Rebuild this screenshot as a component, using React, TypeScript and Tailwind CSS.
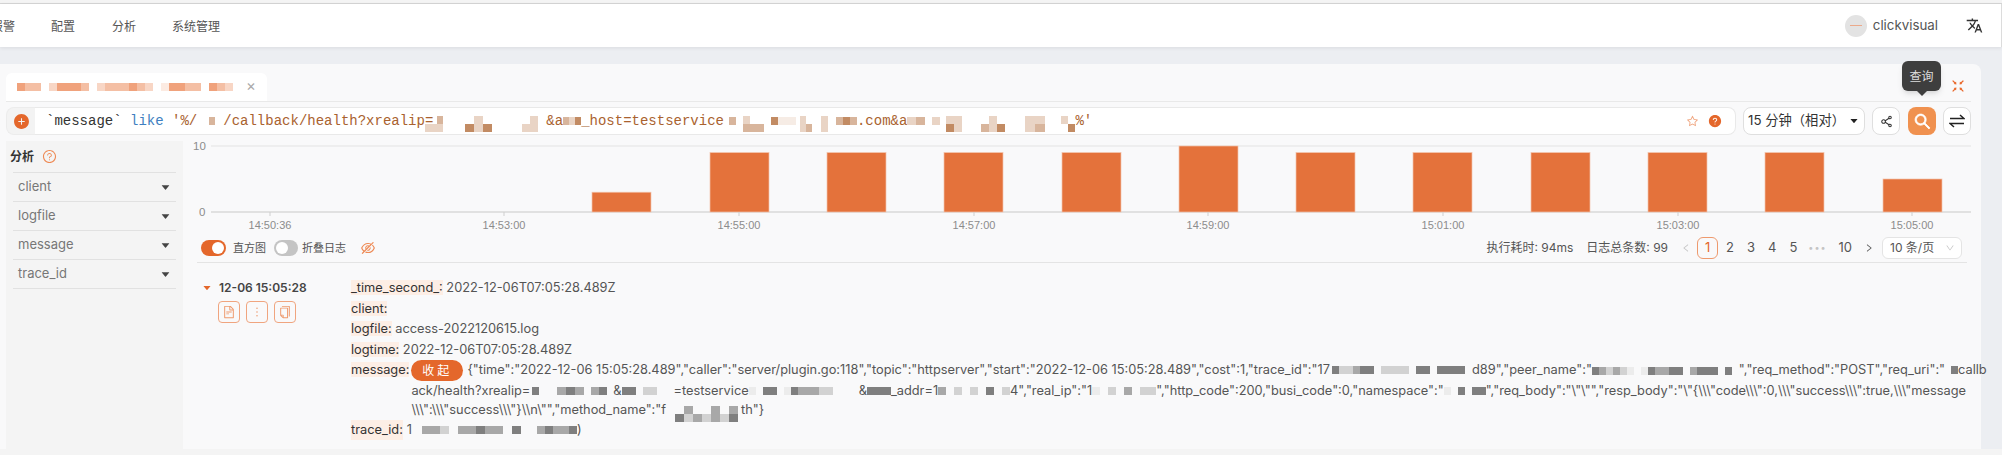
import React from 'react';
import {
  AiFillCaretDown,
  AiFillPlusCircle,
  AiFillQuestionCircle,
  AiOutlineCopy,
  AiOutlineDown,
  AiOutlineEyeInvisible,
  AiOutlineFileText,
  AiOutlineFullscreenExit,
  AiOutlineLeft,
  AiOutlineMore,
  AiOutlineQuestionCircle,
  AiOutlineRight,
  AiOutlineSearch,
  AiOutlineShareAlt,
  AiOutlineStar,
} from 'react-icons/ai';
import { MdTranslate } from 'react-icons/md';

// blurred-out parts of the screenshot, one char per cell
const grayCells: Record<string, string> = {
  '.': 'bg-transparent',
  d: 'bg-[#7f7f7f]',
  m: 'bg-[#a8a8a8]',
  l: 'bg-[#d2d2d2]',
  f: 'bg-[#ececec]',
};
const brownCells: Record<string, string> = {
  '.': 'bg-transparent',
  d: 'bg-[#c28b63]',
  m: 'bg-[#d8b59c]',
  l: 'bg-[#e9d4c5]',
  f: 'bg-[#f6ece5]',
};
const tabCells: Record<string, string> = {
  '.': 'bg-transparent',
  d: 'bg-[#f0a27c]',
  m: 'bg-[#f4bfa4]',
  l: 'bg-[#f8d6c5]',
  f: 'bg-[#fcebe2]',
};

function Blur({ s, map = grayCells, w = 'w-[8px]' }: { s: string; map?: Record<string, string>; w?: string }) {
  return (
    <span className="inline-flex shrink-0 flex-col">
      {s.split('|').map((row, i) => (
        <span key={i} className="flex">
          {row.split('').map((c, j) => (
            <span key={j} className={`h-[8px] ${w} ${map[c]}`} />
          ))}
        </span>
      ))}
    </span>
  );
}

const bars = [
  { x: 592, v: 3 },
  { x: 710, v: 9 },
  { x: 827, v: 9 },
  { x: 944, v: 9 },
  { x: 1062, v: 9 },
  { x: 1179, v: 10 },
  { x: 1296, v: 9 },
  { x: 1413, v: 9 },
  { x: 1531, v: 9 },
  { x: 1648, v: 9 },
  { x: 1765, v: 9 },
  { x: 1883, v: 5 },
];

const ticks = [
  { x: 270, t: '14:50:36' },
  { x: 504, t: '14:53:00' },
  { x: 739, t: '14:55:00' },
  { x: 974, t: '14:57:00' },
  { x: 1208, t: '14:59:00' },
  { x: 1443, t: '15:01:00' },
  { x: 1678, t: '15:03:00' },
  { x: 1912, t: '15:05:00' },
];

function Histogram() {
  return (
    <svg viewBox="183 141 1788 92" className="block h-[92px] w-[1788px] font-['Liberation_Sans',sans-serif]">
      <line x1="211" x2="1971" y1="146" y2="146" stroke="#e3e3e3" strokeWidth="1" />
      <line x1="211" x2="1971" y1="212" y2="212" stroke="#d9d9d9" strokeWidth="1.5" />
      <text x="193" y="150" fontSize="11.5" fill="#8c8c8c">10</text>
      <text x="199" y="216" fontSize="11.5" fill="#8c8c8c">0</text>
      {bars.map((b) => {
        const h = b.v * 6.6;
        return <rect key={b.x} x={b.x} y={212 - h} width="59" height={h} fill="#e4723b" stroke="#f3c3ab" strokeWidth="0.7" />;
      })}
      {ticks.map((t) => (
        <g key={t.t}>
          <line x1={t.x} x2={t.x} y1="212" y2="216" stroke="#cfcfcf" />
          <text x={t.x} y="229" fontSize="11" textAnchor="middle" fill="#8c8c8c">{t.t}</text>
        </g>
      ))}
    </svg>
  );
}

function SwapIcon() {
  return (
    <svg viewBox="0 0 16 16" className="h-[16px] w-[16px]" fill="none" stroke="#222" strokeWidth="1.5">
      <path d="M1 5.5h14L11 2" />
      <path d="M15 10.5H1L5 14" />
    </svg>
  );
}

function FieldItem({ name }: { name: string }) {
  return (
    <div className="flex h-[29px] items-center justify-between border-b border-[#e1e1e1] pl-[5px] pr-[5px] text-[13px] text-[#777]">
      <span>{name}</span>
      <AiFillCaretDown className="text-[11px] text-[#444]" />
    </div>
  );
}

function Label({ children }: { children: React.ReactNode }) {
  return <span className="bg-[#fdeee5] text-[#333]">{children}</span>;
}

function LogButton({ children }: { children: React.ReactNode }) {
  return (
    <span className="flex h-[22px] w-[22px] items-center justify-center rounded-[4px] border border-[#f0a57f] text-[14px] text-[#ee9a6e]">
      {children}
    </span>
  );
}

export default function App() {
  const str = 'text-[#a9622f]';
  return (
    <div className="flex h-[455px] w-[2002px] flex-col overflow-hidden bg-[#eceef2] font-['Inter',sans-serif]">
      <div className="h-[4px] shrink-0 border-b border-[#d6d6d6] bg-[#f4f4f4]" />

      {/* top nav */}
      <header className="flex h-[43px] shrink-0 items-center justify-between border-r border-[#dcdcdc] bg-white pr-[18px] shadow-[0_1px_4px_rgba(0,0,0,0.08)]">
        <nav className="flex items-center text-[12px] text-[#555] font-['Noto_Sans_CJK_SC',sans-serif]">
          <span className="-ml-[9px] w-[60px]">报警</span>
          <span className="w-[61px]">配置</span>
          <span className="w-[60px]">分析</span>
          <span>系统管理</span>
        </nav>
        <div className="flex items-center">
          <span className="flex h-[22px] w-[22px] items-center justify-center rounded-full bg-[#e3e3e3]">
            <span className="h-px w-[12px] bg-[#eba98a]" />
          </span>
          <span className="ml-[6px] text-[13.3px] text-[#555]">clickvisual</span>
          <MdTranslate className="ml-[28px] text-[17px] text-[#333]" />
        </div>
      </header>

      {/* panel */}
      <main className="relative mt-[17px] h-[385px] w-[1981px] shrink-0 rounded-tr-lg bg-[#f9f9fa] pl-[6px]">
        <div className="flex h-[38px] w-[1965px] items-end justify-between border-b border-[#e9e9e9] pt-[10px]">
          <div className="flex h-[28px] w-[261px] items-center rounded-t-md bg-white pl-[11px]">
            <span className="flex items-center gap-[8px]">
              <Blur s="dmm" map={tabCells} />
              <Blur s="ldddm" map={tabCells} />
              <Blur s="lmmmdml" map={tabCells} />
              <Blur s="fddmm" map={tabCells} />
              <Blur s="dml" map={tabCells} />
            </span>
            <span className="mb-[3px] ml-[13px] text-[15px] leading-none text-[#aaa]">×</span>
          </div>
          <AiOutlineFullscreenExit className="mb-[7px] mr-[5px] text-[16px] text-[#e9692c]" />
        </div>

        {/* query row */}
        <div className="mt-[5px] flex h-[28px] w-[1965px] items-stretch">
          <div className="flex w-[29px] shrink-0 items-center justify-center rounded-l-lg border border-r-0 border-[#ececec] bg-[#f3f3f3]">
            <AiFillPlusCircle className="text-[17px] text-[#e4672b]" />
          </div>
          <div className="flex w-[1701px] shrink-0 items-center justify-between rounded-r-lg border border-l-0 border-[#e9e9e9] bg-white pl-[11px] pr-[13px] font-['Liberation_Mono',monospace] text-[14px]">
            <div className="flex items-center whitespace-pre">
              <span className="text-[#333]">`message`</span>
              <span> </span>
              <span className="text-[#3f7fc1]">like</span>
              <span> </span>
              <span className={str}>'%/</span>
              <span className="ml-[12px] mr-[8px]"><Blur s="m" map={brownCells} w="w-[6px]" /></span>
              <span className={str}>/callback/health?xrealip=</span>
              <span className="-ml-[8px]"><Blur s="..m|lll" map={brownCells} w="w-[6px]" /></span>
              <span className="ml-[22px]"><Blur s=".l..|dld" map={brownCells} w="w-[9px]" /></span>
              <span className="ml-[21px]"><Blur s=".l.|ll" map={brownCells} w="w-[8px]" /></span>
              <span className={str}>&amp;a</span>
              <Blur s="mld" map={brownCells} w="w-[6px]" />
              <span className={str}>_host=testservice</span>
              <span className="ml-[5px]"><Blur s="m" map={brownCells} w="w-[7px]" /></span>
              <span className="ml-[7px]"><Blur s="l..|mmm" map={brownCells} w="w-[7px]" /></span>
              <span className="ml-[7px]"><Blur s="d" map={brownCells} w="w-[7px]" /></span>
              <Blur s="ff" map={brownCells} w="w-[9px]" />
              <span className="ml-[4px]"><Blur s="l.|lm" map={brownCells} w="w-[6px]" /></span>
              <span className="ml-[9px]"><Blur s="l|l" map={brownCells} w="w-[7px]" /></span>
              <span className="ml-[8px]"><Blur s="mdm" map={brownCells} w="w-[7px]" /></span>
              <span className={str}>.com&amp;a</span>
              <Blur s="lm" map={brownCells} w="w-[9px]" />
              <span className="ml-[7px]"><Blur s="l" map={brownCells} w="w-[8px]" /></span>
              <span className="ml-[6px]"><Blur s="ll|dl" map={brownCells} w="w-[8px]" /></span>
              <span className="ml-[19px]"><Blur s=".l.|mld" map={brownCells} w="w-[8px]" /></span>
              <span className="ml-[20px]"><Blur s="ll|lm" map={brownCells} w="w-[10px]" /></span>
              <span className="ml-[16px]"><Blur s="l.|.d" map={brownCells} w="w-[7px]" /></span>
              <span className={str}>%'</span>
            </div>
            <div className="flex items-center gap-[9px]">
              <AiOutlineStar className="text-[13px] text-[#f0a883]" />
              <AiFillQuestionCircle className="text-[14px] text-[#e4672b]" />
            </div>
          </div>

          <div className="ml-[7px] flex w-[122px] shrink-0 items-center justify-between rounded-lg border border-[#dfdfdf] bg-white pl-[4px] pr-[5px] text-[13.3px] text-[#333] font-['Inter','Noto_Sans_CJK_SC',sans-serif]">
            <span className="whitespace-pre">15 分钟（相对）</span>
            <AiFillCaretDown className="text-[10px] text-[#222]" />
          </div>
          <button className="ml-[7px] flex w-[28px] shrink-0 items-center justify-center rounded-lg border border-[#dfdfdf] bg-white text-[15px] text-[#333]">
            <AiOutlineShareAlt />
          </button>
          <button className="ml-[8px] flex w-[28px] shrink-0 items-center justify-center rounded-lg bg-[#f0914f] text-[19px] text-white">
            <AiOutlineSearch className="stroke-white stroke-[40px]" />
          </button>
          <button className="ml-[7px] flex w-[28px] shrink-0 items-center justify-center rounded-lg border border-[#dfdfdf] bg-white">
            <SwapIcon />
          </button>
        </div>

        {/* tooltip sits over the query row */}
        <div className="absolute left-[1902px] top-[-3px] flex h-[30px] w-[39px] items-center justify-center rounded-md bg-[#3e3e3e] text-[12px] text-[#ddd] font-['Noto_Sans_CJK_SC',sans-serif] shadow-md">
          查询
          <span className="absolute -bottom-[5px] left-1/2 h-0 w-0 -translate-x-1/2 border-x-[5px] border-t-[5px] border-x-transparent border-t-[#3e3e3e]" />
        </div>

        <div className="mt-[6px] flex h-[308px] w-[1965px]">
          {/* analysis sidebar */}
          <aside className="w-[177px] shrink-0 bg-[#f4f4f4] pl-[7px] pr-[7px]">
            <div className="flex h-[32px] items-center border-b border-[#e1e1e1] pb-[1px] text-[12px] font-bold text-[#333] font-['Noto_Sans_CJK_SC',sans-serif]">
              <span className="-ml-[3px]">分析</span>
              <AiOutlineQuestionCircle className="ml-[8px] text-[15px] font-normal text-[#ee8a55]" />
            </div>
            <FieldItem name="client" />
            <FieldItem name="logfile" />
            <FieldItem name="message" />
            <FieldItem name="trace_id" />
          </aside>

          <section className="min-w-0 flex-1">
            <Histogram />

            {/* toolbar */}
            <div className="ml-[14px] mr-[4px] flex h-[30px] items-center justify-between border-b border-[#e4e4e4] pl-[4px] pr-[5px] text-[11px] text-[#555]">
              <div className="flex items-center font-['Noto_Sans_CJK_SC',sans-serif]">
                <span className="flex h-[16px] w-[25px] items-center justify-end rounded-full bg-[#e4672b] pr-[2px]">
                  <span className="h-[12px] w-[12px] rounded-full bg-white" />
                </span>
                <span className="ml-[7px]">直方图</span>
                <span className="ml-[8px] flex h-[16px] w-[24px] items-center rounded-full bg-[#c4c4c4] pl-[2px]">
                  <span className="h-[12px] w-[12px] rounded-full bg-white" />
                </span>
                <span className="ml-[4px]">折叠日志</span>
                <AiOutlineEyeInvisible className="ml-[14px] text-[16px] text-[#ee8a55]" />
              </div>
              <div className="flex items-center text-[12px] text-[#555] font-['Inter','Noto_Sans_CJK_SC',sans-serif]">
                <span>执行耗时: 94ms</span>
                <span className="ml-[13px]">日志总条数: 99</span>
                <AiOutlineLeft className="ml-[13px] text-[10px] text-[#c4c4c4]" />
                <span className="ml-[6px] flex h-[22px] w-[21px] items-center justify-center rounded-md border border-[#ee9a6e] text-[13px] text-[#e4672b]">1</span>
                <span className="ml-[8px] text-[13px]">2</span>
                <span className="ml-[13px] text-[13px]">3</span>
                <span className="ml-[13px] text-[13px]">4</span>
                <span className="ml-[13px] text-[13px]">5</span>
                <span className="ml-[11px] text-[9px] tracking-[1px] text-[#c4c4c4]">•••</span>
                <span className="ml-[12px] text-[13px]">10</span>
                <AiOutlineRight className="ml-[12px] text-[10px] text-[#555]" />
                <span className="ml-[8px] flex h-[22px] w-[80px] items-center justify-between rounded-md border border-[#e4e4e4] bg-white pl-[7px] pr-[6px]">
                  10 条/页
                  <AiOutlineDown className="text-[10px] text-[#c4c4c4]" />
                </span>
              </div>
            </div>

            {/* log row */}
            <div className="flex pt-[15px] text-[12.8px] text-[#555]">
              <div className="ml-[19px] w-[149px] shrink-0">
                <div className="flex h-[20px] items-center">
                  <AiFillCaretDown className="text-[10px] text-[#e4672b]" />
                  <span className="ml-[7px] text-[12px] font-semibold text-[#444]">12-06 15:05:28</span>
                </div>
                <div className="ml-[16px] mt-[3px] flex gap-[6px]">
                  <LogButton><AiOutlineFileText /></LogButton>
                  <LogButton><AiOutlineMore /></LogButton>
                  <LogButton><AiOutlineCopy /></LogButton>
                </div>
              </div>
              <div className="min-w-0 flex-1 whitespace-pre leading-[20.5px]">
                <div><Label>_time_second_:</Label> 2022-12-06T07:05:28.489Z</div>
                <div><Label>client:</Label></div>
                <div><Label>logfile:</Label> access-2022120615.log</div>
                <div><Label>logtime:</Label> 2022-12-06T07:05:28.489Z</div>
                <div className="flex">
                  <div className="shrink-0"><Label>message:</Label></div>
                  <div className="ml-[2px]">
                    <div className="flex h-[21px] items-center">
                      <span className="flex h-[21px] w-[52px] items-center justify-center rounded-full bg-[#e4672b] text-[12px] tracking-[3px] text-white font-['Noto_Sans_CJK_SC',sans-serif]">收起</span>
                      <span className="ml-[4px]">{'{"time":"2022-12-06 15:05:28.489","caller":"server/plugin.go:118","topic":"httpserver","start":"2022-12-06 15:05:28.489","cost":1,"trace_id":"17'}</span>
                      <span className="ml-[2px]"><Blur s="dllmdd.llll.dd.dddd." w="w-[7px]" /></span>
                      <span>{'d89","peer_name":"'}</span>
                      <Blur s="dmlmlf.fdmmdd.mddd.d." w="w-[7px]" />
                      <span>{'","req_method":"POST","req_uri":"'}</span>
                      <span className="ml-[6px]"><Blur s="d" w="w-[7px]" /></span>
                      <span>callb</span>
                    </div>
                    <div className="flex h-[20px] items-center">
                      <span>ack/health?xrealip=</span>
                      <span className="ml-[2px]"><Blur s="d" w="w-[7px]" /></span>
                      <span className="ml-[18px]"><Blur s="mdm" w="w-[9px]" /></span>
                      <span className="ml-[7px]"><Blur s="md" w="w-[8px]" /></span>
                      <span className="ml-[6px]">&amp;</span>
                      <Blur s="dd.ll.." w="w-[7px]" />
                      <span className="ml-[3px]">=testservice</span>
                      <Blur s="f.dd.fdmmmll" w="w-[7px]" />
                      <span className="ml-[26px]">&amp;</span>
                      <Blur s="ddd" w="w-[8px]" />
                      <span>_addr=1</span>
                      <Blur s="m.l.l.d.l" w="w-[8px]" />
                      <span>{'4","real_ip":"1'}</span>
                      <Blur s="f.l.m.ll" w="w-[8px]" />
                      <span>{'","http_code":200,"busi_code":0,"namespace":"'}</span>
                      <Blur s="f.d.dd" w="w-[7px]" />
                      <span>{'","req_body":"\\"\\"","resp_body":"\\"{\\\\\\"code\\\\\\":0,\\\\\\"success\\\\\\":true,\\\\\\"message'}</span>
                    </div>
                    <div className="flex h-[19px] items-center">
                      <span>{'\\\\\\":\\\\\\"success\\\\\\"}\\\\n\\"","method_name":"f'}</span>
                      <span className="ml-[9px]"><Blur s=".m..m.m|dlmlmld" w="w-[9px]" /></span>
                      <span className="ml-[3px]">{'th"}'}</span>
                    </div>
                  </div>
                </div>
                <div className="flex h-[20px] items-center">
                  <Label>trace_id:</Label>
                  <span className="ml-[4px]">1</span>
                  <span className="ml-[10px]"><Blur s="mml" w="w-[9px]" /></span>
                  <span className="ml-[9px]"><Blur s="mmdmm.d" w="w-[9px]" /></span>
                  <span className="ml-[16px]"><Blur s="mdmmd" w="w-[8px]" /></span>
                  <span>)</span>
                </div>
              </div>
            </div>
          </section>
        </div>
      </main>

      <div className="flex-1 bg-[#f4f4f4]" />
    </div>
  );
}
